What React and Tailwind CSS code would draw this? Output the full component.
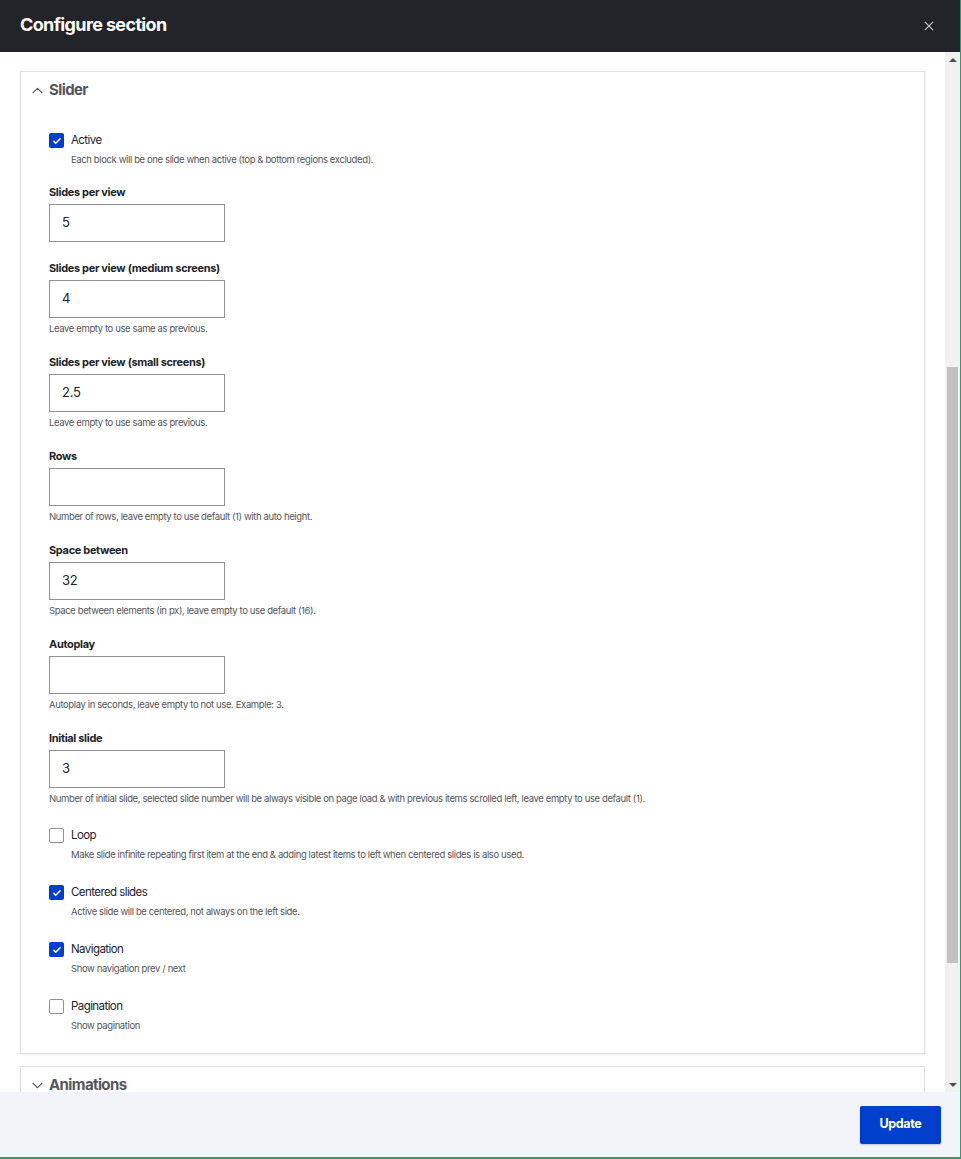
import React from 'react';

const Check = () => (
  <svg viewBox="0 0 16 16" className="h-[10px] w-[10px]" fill="none" stroke="white" strokeWidth="2.4" strokeLinecap="round" strokeLinejoin="round">
    <path d="M3 8.5l3 3 7-7" />
  </svg>
);

const Checkbox = ({ checked, label, desc }) => (
  <div className="mb-[24px] last:mb-0">
    <div className="flex h-[15px] items-center">
      {checked ? (
        <span className="flex h-[15px] w-[15px] items-center justify-center rounded-[2px] bg-[#003ecc]">
          <Check />
        </span>
      ) : (
        <span className="h-[15px] w-[15px] rounded-[2px] border border-[#8e929c] bg-white" />
      )}
      <span className="ml-[7px] text-[11.5px] leading-[15px] tracking-[-0.05em] text-[#222330]">{label}</span>
    </div>
    <p className="ml-[22px] mt-[6px] text-[9.5px] leading-[12px] tracking-[-0.04em] text-[#55565b]">{desc}</p>
  </div>
);

const Field = ({ label, value, desc }) => (
  <div className={desc ? 'mb-[20px]' : 'mb-[19px]'}>
    <label className="block text-[11px] font-bold leading-[14px] tracking-[-0.03em] text-[#232429]">{label}</label>
    <div className="mt-[5px] flex h-[38px] w-[176px] items-center border border-[#919297] bg-white px-[12px] text-[13px] tracking-[-0.02em] text-[#222330]">
      {value}
    </div>
    {desc && (
      <p className="mt-[5px] text-[9.5px] leading-[12px] tracking-[-0.04em] text-[#55565b]">{desc}</p>
    )}
  </div>
);

const Chevron = ({ up }) => (
  <svg viewBox="0 0 12 8" className="h-[7px] w-[11px]" fill="none" stroke="#55565b" strokeWidth="1.4" strokeLinecap="round" strokeLinejoin="round">
    {up ? <path d="M1 6.5l5-5 5 5" /> : <path d="M1 1.5l5 5 5-5" />}
  </svg>
);

export default function App() {
  const fields = [
    { label: 'Slides per view', value: '5' },
    { label: 'Slides per view (medium screens)', value: '4', desc: 'Leave empty to use same as previous.' },
    { label: 'Slides per view (small screens)', value: '2.5', desc: 'Leave empty to use same as previous.' },
    { label: 'Rows', value: '', desc: 'Number of rows, leave empty to use default (1) with auto height.' },
    { label: 'Space between', value: '32', desc: 'Space between elements (in px), leave empty to use default (16).' },
    { label: 'Autoplay', value: '', desc: 'Autoplay in seconds, leave empty to not use. Example: 3.' },
    {
      label: 'Initial slide',
      value: '3',
      desc: 'Number of initial slide, selected slide number will be always visible on page load & with previous items scrolled left, leave empty to use default (1).',
    },
  ];

  return (
    <div className="flex h-[1159px] w-[961px] flex-col overflow-hidden border-b-2 border-r border-[#26a269] bg-white font-['Inter',sans-serif]">
      {/* Header */}
      <div className="flex h-[52px] shrink-0 items-center justify-between bg-[#232429] pl-[20px] pr-[26px]">
        <h1 className="mb-[4px] text-[18px] font-bold tracking-[-0.035em] text-white">Configure section</h1>
        <svg viewBox="0 0 12 12" className="h-[10px] w-[10px]" fill="none" stroke="#c8c9cd" strokeWidth="1.3">
          <path d="M1 1l10 10M11 1L1 11" />
        </svg>
      </div>

      {/* Body */}
      <div className="flex min-h-0 flex-1">
        <div className="min-w-0 flex-1 overflow-hidden px-[20px] pt-[19px]">
          <div className="border border-[#dedfe4] bg-white shadow-[0_1px_2px_rgba(0,0,0,0.08)]">
            <div className="flex h-[37px] items-center pl-[11px]">
              <Chevron up />
              <span className="ml-[6px] text-[15px] font-bold tracking-[-0.04em] text-[#55565b]">Slider</span>
            </div>
            <div className="pb-[21px] pl-[28px] pt-[24px]">
              <div className="mb-[19px]">
                <Checkbox checked label="Active" desc="Each block will be one slide when active (top & bottom regions excluded)." />
              </div>
              {fields.map((f) => (
                <Field key={f.label} {...f} />
              ))}
              <div className="pt-[3px]">
                <Checkbox label="Loop" desc="Make slide infinite repeating first item at the end & adding latest items to left when centered slides is also used." />
                <Checkbox checked label="Centered slides" desc="Active slide will be centered, not always on the left side." />
                <Checkbox checked label="Navigation" desc="Show navigation prev / next" />
                <Checkbox label="Pagination" desc="Show pagination" />
              </div>
            </div>
          </div>
          <div className="mt-[12px] border border-[#dedfe4] bg-white">
            <div className="flex h-[36px] items-center pl-[11px]">
              <Chevron />
              <span className="ml-[6px] text-[15px] font-bold tracking-[-0.04em] text-[#55565b]">Animations</span>
            </div>
          </div>
        </div>

        {/* Scrollbar */}
        <div className="flex w-[15px] shrink-0 flex-col bg-[#f1f1f1]">
          <div className="flex h-[15px] items-center justify-center">
            <span className="h-0 w-0 border-x-[4px] border-b-[4px] border-x-transparent border-b-[#505050]" />
          </div>
          <div className="h-[300px]" />
          <div className="mx-[2px] h-[596px] bg-[#c1c1c1]" />
          <div className="flex-1" />
          <div className="flex h-[15px] items-center justify-center">
            <span className="h-0 w-0 border-x-[4px] border-t-[4px] border-x-transparent border-t-[#505050]" />
          </div>
        </div>
      </div>

      {/* Footer */}
      <div className="flex h-[65px] shrink-0 items-center justify-end bg-[#f3f4f9] pr-[19px]">
        <button className="h-[38px] w-[81px] rounded-[2px] bg-[#003ecc] text-[12.5px] font-bold tracking-[-0.03em] text-white shadow-[0_1px_2px_rgba(0,0,0,0.2)]">
          Update
        </button>
      </div>
    </div>
  );
}
